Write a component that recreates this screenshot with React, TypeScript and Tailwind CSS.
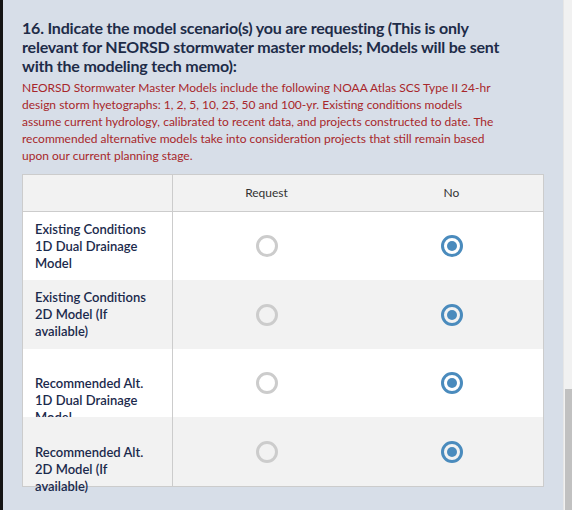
import React from 'react';

const rows = [
    { label: 'Existing Conditions 1D Dual Drainage Model', bg: 'bg-white', h: 'h-[68px]', shift: false },
    { label: 'Existing Conditions 2D Model (If available)', bg: 'bg-[#f2f2f2]', h: 'h-[69px]', shift: false },
    { label: 'Recommended Alt. 1D Dual Drainage Model', bg: 'bg-white', h: 'h-[68px]', shift: true },
    { label: 'Recommended Alt. 2D Model (If available)', bg: 'bg-[#f2f2f2]', h: 'h-[69px]', shift: true },
];

const Radio: React.FC<{ checked?: boolean }> = ({ checked }) =>
    checked ? (
        <span className="w-[22px] h-[22px] rounded-full border-[3px] border-[#4a8bbd] flex items-center justify-center">
            <span className="w-[10px] h-[10px] rounded-full bg-[#4a8bbd]" />
        </span>
    ) : (
        <span className="w-[22px] h-[22px] rounded-full border-[3px] border-[#cccccc]" />
    );

const App: React.FC = () => {
    return (
        <div className="w-[572px] h-[510px] flex overflow-hidden font-['Lato',sans-serif]">
            <div className="w-[3px] bg-[#141414]" />
            <div className="w-[560px] bg-[#d7dee8] px-[19px] pt-[18px]">
                <div className="max-w-[480px]">
                    <h2 className="text-[16px] leading-[19px] tracking-[-0.2px] font-bold text-[#1e2c48]">
                        16. Indicate the model scenario(s) you are requesting (This is only relevant for NEORSD stormwater master models; Models will be sent with the modeling tech memo):
                    </h2>
                    <p className="mt-[4px] text-[12px] leading-[17px] text-[#a8272b]">
                        NEORSD Stormwater Master Models include the following NOAA Atlas SCS Type II 24-hr design storm hyetographs: 1, 2, 5, 10, 25, 50 and 100-yr. Existing conditions models assume current hydrology, calibrated to recent data, and projects constructed to date. The recommended alternative models take into consideration projects that still remain based upon our current planning stage.
                    </p>
                </div>
                <div className="mt-[10px] border border-[#cccccc]">
                    <div className="flex h-[37px] bg-[#f2f2f2] border-b border-[#cccccc] text-[12px] text-[#333333]">
                        <div className="w-[150px] border-r border-[#cccccc]" />
                        <div className="w-[187px] flex items-center justify-center">Request</div>
                        <div className="flex-1 flex items-center justify-center">No</div>
                    </div>
                    {rows.map((r) => (
                        <div key={r.label} className={`relative flex ${r.h} ${r.bg}`}>
                            <div
                                className={`w-[150px] border-r border-[#cccccc] px-[12px] flex items-center text-[13px] leading-[17px] font-semibold text-[#1b2a4c] ${r.shift ? 'pt-[35px]' : ''}`}
                            >
                                <span>{r.label}</span>
                            </div>
                            <div className="w-[187px] flex items-center justify-center">
                                <Radio />
                            </div>
                            <div className="flex-1 flex items-center justify-center">
                                <Radio checked />
                            </div>
                        </div>
                    ))}
                </div>
            </div>
            <div className="w-px bg-[#e6e6e6]" />
            <div className="w-[8px] bg-[#f1f1f1] pt-[389px] pl-px">
                <div className="h-full bg-[#c1c1c1]" />
            </div>
        </div>
    );
};

export default App;
